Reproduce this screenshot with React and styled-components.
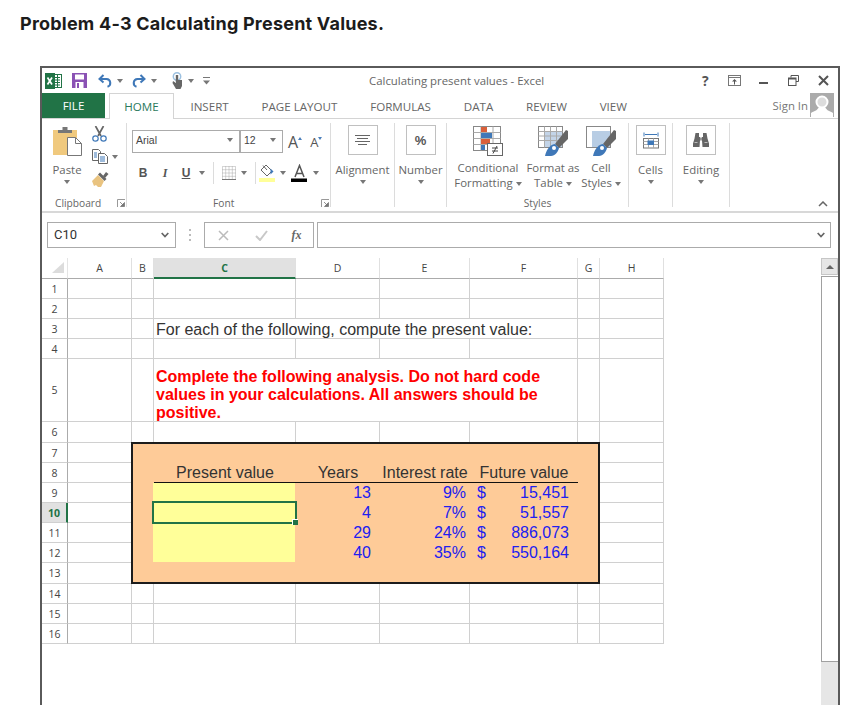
import React from "react";
import styled, { createGlobalStyle } from "styled-components";

const GlobalStyle = createGlobalStyle`
  html, body { margin: 0; padding: 0; background: #fff; }
  body { width: 857px; height: 705px; overflow: hidden; font-family: "Open Sans", "Liberation Sans", sans-serif; }
  * { box-sizing: border-box; }
`;

const Heading = styled.h1`
  margin: 0;
  height: 66px;
  padding: 12px 0 0 20px;
  font-family: Inter, "Liberation Sans", sans-serif;
  font-size: 18px;
  letter-spacing: 0.22px;
  line-height: 24px;
  font-weight: 700;
  color: #1c1c1c;
`;

const Excel = styled.div`
  margin-left: 40px;
  width: 800px;
  height: 639px;
  border: 2px solid #5a5a5a;
  border-bottom: 0;
  display: flex;
  flex-direction: column;
  font-size: 11.4px;
  color: #666;
`;

const TitleBar = styled.div`
  height: 25px;
  display: flex;
  align-items: center;
`;

const QuickAccess = styled.div`
  width: 327px;
  padding-left: 3px;
  display: flex;
  align-items: center;
`;

const QuickItem = styled.span`
  display: inline-flex;
  margin-left: ${(p) => p.$ml || 0}px;
`;

const WindowTitle = styled.div`
  color: #666;
  font-size: 11.4px;
  white-space: nowrap;
`;

const WindowControls = styled.div`
  margin-left: auto;
  display: flex;
  align-items: center;
`;

const Control = styled.span`
  width: 29.5px;
  display: flex;
  justify-content: center;
  color: #555;
  font-weight: 700;
  font-size: 14px;
  line-height: 16px;
`;

const TabBar = styled.div`
  height: 26px;
  display: flex;
  border-bottom: 1px solid #d4d4d4;
  font-size: 11.6px;
`;

const FileTab = styled.div`
  width: 63px;
  height: 25px;
  background: #217346;
  color: #fff;
  display: flex;
  align-items: center;
  justify-content: center;
  margin-right: 4px;
`;

const Tab = styled.div`
  height: 26px;
  padding: 0 16.4px;
  display: flex;
  align-items: center;
  color: ${(p) => (p.$active ? "#2b7a5c" : "#666")};
  ${(p) => p.$active && "width: 65px; justify-content: center; padding: 0; background: #fff; border: 1px solid #d4d4d4; border-bottom: 0;"}
`;

const SignIn = styled.div`
  margin-left: auto;
  display: flex;
  align-items: flex-start;
  gap: 2px;
  padding-right: 4px;
  color: #777;
  font-size: 11.4px;
  line-height: 25px;
`;

const Ribbon = styled.div`
  height: 94px;
  padding: 4px 0 4px;
  display: flex;
  border-bottom: 2px solid #d8d8d8;
`;

const Group = styled.div`
  width: ${(p) => p.$w}px;
  height: 84px;
  border-right: 1px solid #dcdcdc;
  display: flex;
  flex-direction: column;
`;

const GroupBody = styled.div`
  flex: 1;
  display: flex;
  flex-direction: ${(p) => p.$dir || "row"};
  align-items: ${(p) => p.$align || "flex-start"};
  padding-left: ${(p) => p.$pl || 0}px;
`;

const GroupFooter = styled.div`
  height: 12px;
  margin-bottom: -2px;
  display: flex;
  align-items: center;
  justify-content: ${(p) => (p.$pl ? "flex-start" : "center")};
  line-height: 16px;
  color: #666;
  font-size: 10.2px;
  padding-left: ${(p) => p.$pl || 0}px;
`;

const Launcher = styled.span`
  display: inline-flex;
  margin-left: ${(p) => p.$ml}px;
`;

const Collapse = styled.div`
  margin-left: auto;
  align-self: flex-end;
  padding-right: 10px;
  display: flex;
`;

const PasteCol = styled.div`
  width: 28px;
  margin: 3px 0 0 11px;
  display: flex;
  flex-direction: column;
  align-items: center;
`;

const ToolCol = styled.div`
  margin: 3px 0 0 11px;
  display: flex;
  flex-direction: column;
  gap: 7px;
`;

const ToolRow = styled.div`
  display: flex;
  align-items: center;
  gap: 4px;
`;

const BigLabel = styled.div`
  margin-top: ${(p) => p.$mt ?? 8}px;
  line-height: 14px;
  white-space: nowrap;
`;

const Caret = styled.span`
  display: inline-block;
  flex: none;
  width: 0;
  height: 0;
  border-left: 3.5px solid transparent;
  border-right: 3.5px solid transparent;
  border-top: 4px solid #777;
  margin-left: ${(p) => p.$ml || 0}px;
  margin-top: ${(p) => p.$mt || 0}px;
  vertical-align: middle;
`;

const FontRow = styled.div`
  display: flex;
  align-items: center;
  margin-top: ${(p) => p.$mt || 0}px;
`;

const SelectBox = styled.div`
  width: ${(p) => p.$w}px;
  height: 23px;
  border: 1px solid #ababab;
  margin-left: ${(p) => p.$ml || 0}px;
  display: flex;
  align-items: center;
  justify-content: space-between;
  padding: 0 6px 3px 3px;
  font-family: "Liberation Sans", sans-serif;
  font-size: 10.5px;
  color: #444;
`;

const GrowA = styled.span`
  display: inline-flex;
  align-items: flex-start;
  margin-left: ${(p) => p.$ml}px;
  font-size: ${(p) => p.$size}px;
  line-height: 20px;
  color: #555;
`;

const BlueTip = styled.span`
  width: 0;
  height: 0;
  margin-top: 5px;
  border-left: 2.5px solid transparent;
  border-right: 2.5px solid transparent;
  ${(p) => (p.$down ? "border-top: 3px solid #4a7ebb;" : "border-bottom: 3px solid #4a7ebb;")}
`;

const StyleBtn = styled.span`
  width: ${(p) => p.$w}px;
  text-align: center;
  font-family: ${(p) => p.$font || '"Liberation Sans", sans-serif'};
  font-weight: ${(p) => p.$weight || 700};
  font-style: ${(p) => (p.$italic ? "italic" : "normal")};
  text-decoration: ${(p) => (p.$under ? "underline" : "none")};
  font-size: 12px;
  line-height: 16px;
  color: #555;
`;

const VSep = styled.span`
  width: 1px;
  height: 22px;
  background: #dcdcdc;
  margin-left: ${(p) => p.$ml}px;
`;

const Spot = styled.span`
  display: inline-flex;
  margin-left: ${(p) => p.$ml || 0}px;
`;

const IconBox = styled.div`
  width: 30px;
  height: 30px;
  margin-top: 2px;
  border: 1px solid #c0c0c0;
  display: flex;
  align-items: center;
  justify-content: center;
  color: #555;
`;

const PercentGlyph = styled.span`
  font-family: "Liberation Sans", sans-serif;
  font-weight: 700;
  font-size: 13px;
`;

const StyleCol = styled.div`
  width: ${(p) => p.$w}px;
  margin-top: 3px;
  display: flex;
  flex-direction: column;
  align-items: center;
  line-height: 15px;
  white-space: nowrap;
`;

const StyleLabel = styled.div`
  margin-top: 4px;
  text-align: center;
`;

const FormulaBar = styled.div`
  height: 45px;
  padding: 9px 7px 0 5px;
  display: flex;
  align-items: flex-start;
`;

const NameBox = styled.div`
  width: 129px;
  height: 26px;
  border: 1px solid #ababab;
  padding: 0 6px 1px;
  display: flex;
  align-items: center;
  justify-content: space-between;
  color: #333;
  font-size: 13px;
  font-family: Roboto, sans-serif;
`;

const Dots = styled.div`
  width: 28px;
  height: 26px;
  display: flex;
  align-items: center;
  justify-content: center;
`;

const FxBox = styled.div`
  width: 110px;
  height: 26px;
  border: 1px solid #ababab;
  display: grid;
  grid-template-columns: 37px 38px 1fr;
  align-items: center;
  justify-items: center;
`;

const FxMark = styled.span`
  font-family: "Liberation Serif", serif;
  font-style: italic;
  font-weight: 700;
  font-size: 12px;
  color: #666;
`;

const FormulaInput = styled.div`
  flex: 1;
  height: 26px;
  margin-left: 3px;
  border: 1px solid #ababab;
  display: flex;
  align-items: center;
  justify-content: flex-end;
  padding-right: 5px;
`;

const SheetArea = styled.div`
  flex: 1;
  min-height: 0;
  display: flex;
  justify-content: space-between;
`;

const Grid = styled.div`
  width: 622px;
  align-self: flex-start;
  display: grid;
  grid-template-columns: 26px 64px 22px 142px 84px 90px 108px 22px 64px;
  grid-template-rows: 21px 20px 20px 20px 20px 63px 21px 20px 20px 20px 20px 20px 20px 21px 20px 20px 20px;
  font-family: "Liberation Sans", sans-serif;
`;

const Corner = styled.div`
  grid-column: 1;
  grid-row: 1;
  padding: 4px 0 0 10px;
  border-right: 1px solid #e4e4e4;
  border-bottom: 1px solid #ababab;
`;

const ColHead = styled.div`
  grid-column: ${(p) => p.$col};
  grid-row: 1;
  display: flex;
  align-items: center;
  justify-content: center;
  font-family: "Open Sans", sans-serif;
  font-size: 10.5px;
  color: ${(p) => (p.$active ? "#217346" : "#444")};
  font-weight: ${(p) => (p.$active ? 700 : 400)};
  background: ${(p) => (p.$active ? "#e1e1e1" : "#fff")};
  border-right: 1px solid #e0e0e0;
  border-bottom: ${(p) => (p.$active ? "2px solid #217346" : "1px solid #ababab")};
`;

const RowHead = styled.div`
  grid-column: 1;
  grid-row: ${(p) => p.$row};
  display: flex;
  align-items: center;
  justify-content: center;
  font-family: "Open Sans", sans-serif;
  font-size: 10.5px;
  color: ${(p) => (p.$active ? "#217346" : "#444")};
  font-weight: ${(p) => (p.$active ? 700 : 400)};
  background: ${(p) => (p.$active ? "#e1e1e1" : "#fff")};
  border-bottom: 1px solid #d0d0d0;
  border-right: ${(p) => (p.$active ? "2px solid #217346" : "1px solid #ababab")};
`;

const Cell = styled.div`
  grid-column: ${(p) => p.$col};
  grid-row: ${(p) => p.$row};
  border-right: 1px solid #d0d0d0;
  border-bottom: 1px solid #d0d0d0;
`;

const MergedNote = styled.div`
  grid-column: 4 / 8;
  grid-row: ${(p) => p.$row};
  background: #fff;
  border-right: 1px solid #d0d0d0;
  border-bottom: 1px solid #d0d0d0;
  padding-left: 2px;
  display: flex;
  align-items: flex-end;
  font-size: 16px;
  line-height: 16px;
  color: #333;
`;

const Warning = styled(MergedNote)`
  color: #f00;
  font-weight: 700;
  line-height: 18px;
`;

const WarningText = styled.div`
  margin-bottom: -1px;
`;

const Panel = styled.div`
  grid-column: 3 / 9;
  grid-row: 8 / 15;
  margin: -1px 0 0 -1px;
  background: #fecb98;
  border: 2px solid #1c1c1c;
`;

const ColTitle = styled.div`
  grid-column: ${(p) => p.$col};
  grid-row: 9;
  border-bottom: 1px solid #111;
  text-align: center;
  font-size: 16px;
  line-height: 20px;
  color: #333;
  white-space: nowrap;
`;

const InputBlock = styled.div`
  grid-column: 4;
  grid-row: 10 / 14;
  margin: 0 1px 1px -1px;
  background: #ffff99;
`;

const Selected = styled.div`
  grid-column: 4;
  grid-row: 11;
  position: relative;
  margin: -2px -1px -1px -2px;
  border: 2px solid #217346;
  height: 23px;
`;

const FillHandle = styled.span`
  position: absolute;
  right: -3px;
  bottom: -3px;
  width: 6px;
  height: 6px;
  background: #217346;
  border-left: 1px solid #fff;
  border-top: 1px solid #fff;
`;

const Value = styled.div`
  grid-column: ${(p) => p.$col};
  grid-row: ${(p) => p.$row};
  padding-right: ${(p) => p.$pr || 0}px;
  padding-left: ${(p) => p.$pl || 0}px;
  text-align: ${(p) => (p.$left ? "left" : "right")};
  font-size: 16px;
  line-height: 20px;
  color: #2020f0;
`;

const Scrollbar = styled.div`
  width: 17px;
  display: flex;
  flex-direction: column;
`;

const ScrollButton = styled.div`
  height: 17px;
  margin-bottom: 1px;
  background: #e6e6e6;
  border: 1px solid #c6c6c6;
  display: flex;
  align-items: center;
  justify-content: center;
`;

const ScrollThumb = styled.div`
  height: 386px;
  background: #fff;
  border: 1px solid #a0a0a0;
  border-right-width: 0;
`;

const ScrollTrack = styled.div`
  flex: 1;
  background: #e6e6e6;
`;

const UpTip = styled.span`
  width: 0;
  height: 0;
  border-left: 4px solid transparent;
  border-right: 4px solid transparent;
  border-bottom: 4px solid #666;
`;

const ExcelLogo = () => (
  <svg width="17" height="16" viewBox="0 0 17 16">
    <rect x="7.5" y="1.5" width="9" height="13" fill="#fff" stroke="#217346" />
    <path d="M10 4.5h5M10 7h5M10 9.5h5M10 12h5M12.5 2v12" stroke="#217346" strokeWidth="1" fill="none" />
    <rect x="0" y="0" width="10" height="16" fill="#217346" />
    <path d="M2.5 4.5l4.5 7M7 4.5l-4.5 7" stroke="#fff" strokeWidth="1.7" fill="none" />
  </svg>
);

const SaveIcon = () => (
  <svg width="15" height="15" viewBox="0 0 15 15">
    <rect width="15" height="15" fill="#8a52b4" />
    <rect x="3" y="1.5" width="9" height="5" fill="#fff" />
    <rect x="3.5" y="9" width="8" height="6" fill="#fff" />
    <rect x="5" y="10" width="2" height="5" fill="#8a52b4" />
  </svg>
);

const UndoIcon = ({ flip }) => (
  <svg width="14" height="14" viewBox="0 0 14 14" style={flip ? { transform: "scaleX(-1)" } : undefined}>
    <path d="M5.5 1L1.5 5l4 3.5" stroke="#3f78b8" strokeWidth="2" fill="none" />
    <path d="M2 5h6.5a4 4 0 0 1 1 7.8" stroke="#3f78b8" strokeWidth="2" fill="none" />
  </svg>
);

const TouchIcon = () => (
  <svg width="12" height="17" viewBox="0 0 12 17">
    <circle cx="5" cy="4.5" r="3.7" fill="none" stroke="#9cc0e0" strokeWidth="1.5" />
    <rect x="3.8" y="3" width="2.4" height="7" fill="#666" />
    <path d="M1 9l3 2V8h6v6l-1.5 3H4L0.5 11z" fill="#666" />
  </svg>
);

const CustomizeIcon = () => (
  <svg width="7" height="8" viewBox="0 0 7 8">
    <path d="M0 .5h7" stroke="#777" />
    <path d="M0 3.500h7L3.500 7.500z" fill="#777" />
  </svg>
);

const RibbonDisplayIcon = () => (
  <svg width="13" height="11" viewBox="0 0 13 11">
    <rect x=".5" y=".5" width="12" height="10" fill="none" stroke="#777" />
    <path d="M.5 2.5h12" stroke="#777" />
    <path d="M6.5 4L4 6.5h5zM6 6.5h1v3H6z" fill="#555" />
  </svg>
);

const MinIcon = () => (
  <svg width="10" height="10" viewBox="0 0 10 10"><rect x="0" y="6" width="9" height="2" fill="#555" /></svg>
);

const RestoreIcon = () => (
  <svg width="11" height="11" viewBox="0 0 11 11">
    <path d="M3 2.5V.5h7.5v6H8" fill="none" stroke="#555" />
    <rect x=".5" y="3" width="7.5" height="7.5" fill="#fff" stroke="#555" />
    <rect x=".5" y="3" width="7.5" height="1.5" fill="#555" />
  </svg>
);

const CloseIcon = () => (
  <svg width="11" height="11" viewBox="0 0 11 11">
    <path d="M1 1l9 9M10 1l-9 9" stroke="#555" strokeWidth="2" />
  </svg>
);

const Avatar = () => (
  <svg width="24" height="24" viewBox="0 0 24 24">
    <rect width="24" height="24" fill="#ababab" />
    <path d="M1 24v-4c3-2 6-2 8-6h6c2 4 5 4 8 6v4z" fill="#fff" />
    <circle cx="12" cy="9" r="5.5" fill="#dcdcdc" stroke="#fff" strokeWidth="2" />
  </svg>
);

const PasteIcon = () => (
  <svg width="29" height="30" viewBox="0 0 29 30">
    <rect x="0" y="4" width="24" height="25" fill="#f0c97e" />
    <path d="M5 7V4h4.5V1h5v3H19v3z" fill="#777" />
    <path d="M14.5 11.5h8l6 6v12h-14z" fill="#fff" stroke="#777" />
    <path d="M22.5 11.5v6h6" fill="none" stroke="#777" />
  </svg>
);

const ScissorsIcon = () => (
  <svg width="15" height="16" viewBox="0 0 15 16">
    <path d="M3.5 0l5.5 10M11.5 0L6 10" stroke="#666" strokeWidth="1.7" fill="none" />
    <circle cx="3.5" cy="12.5" r="2.7" fill="#fff" stroke="#3f78b8" strokeWidth="1.2" />
    <circle cx="11.5" cy="12.5" r="2.7" fill="#fff" stroke="#3f78b8" strokeWidth="1.2" />
  </svg>
);

const CopyIcon = () => (
  <svg width="16" height="15" viewBox="0 0 16 15">
    <path d="M.5.5h6l2 2v9H.5z" fill="#fff" stroke="#666" />
    <path d="M6.5 4.5h6l3 3v7h-9z" fill="#fff" stroke="#666" />
    <path d="M2 4h3M2 6h3M2 8h3M8 8h5M8 10h5M8 12h5" stroke="#3f78b8" />
  </svg>
);

const BrushIcon = () => (
  <svg width="17" height="16" viewBox="0 0 17 16">
    <path d="M0 10l6-6 6 6-3 6H6l-2-2-2 1z" fill="#e9c380" />
    <path d="M6 3.500L12.500 10l2-2L8 1.500z" fill="#666" />
    <path d="M11 5l3-4 2.500 2L13 7z" fill="#666" />
  </svg>
);

const LauncherIcon = () => (
  <svg width="9" height="9" viewBox="0 0 9 9">
    <path d="M.5 8V.5H8" fill="none" stroke="#999" />
    <path d="M3 3l3.500 3.500M7.500 3.500v4h-4z" fill="#777" stroke="#777" strokeWidth=".8" />
  </svg>
);

const BorderIcon = () => (
  <svg width="14" height="14" viewBox="0 0 14 14">
    <path d="M.5.5h13v13H.5zM7 .5v13M.5 7h13M3.700.5v13M10.300.5v13M.5 3.700h13M.5 10.300h13" fill="none" stroke="#aaa" strokeDasharray="1 1" />
    <path d="M0 13.500h14" stroke="#777" />
  </svg>
);

const FillIcon = () => (
  <svg width="17" height="18" viewBox="0 0 17 18">
    <path d="M7 1l6 6-5 5-6-6z" fill="#fff" stroke="#666" />
    <path d="M4 1.500L8 6" stroke="#666" />
    <path d="M11.500 4.500l3 3-3 3z" fill="#3f78b8" />
    <rect x="0" y="14" width="16" height="4" fill="#ffff99" />
  </svg>
);

const ColorAIcon = () => (
  <svg width="17" height="18" viewBox="0 0 17 18">
    <path d="M4 13L8.500 1.500 13 13M5.500 9.500h6" fill="none" stroke="#555" strokeWidth="1.500" />
    <rect x="0" y="14.500" width="16" height="3.500" fill="#000" />
  </svg>
);

const AlignIcon = () => (
  <svg width="15" height="11" viewBox="0 0 15 11">
    <path d="M0 .5h15M2 3.500h11M0 6.500h15M3 9.500h9" stroke="#666" />
  </svg>
);

const CondIcon = () => (
  <svg width="31" height="30" viewBox="0 0 31 30">
    <rect x=".5" y=".5" width="27" height="24" fill="#fff" stroke="#888" />
    <path d="M8 .5v24M20 .5v24M.5 6.500h27M.5 12.500h27M.5 18.500h27" stroke="#aaa" />
    <rect x="8" y="1" width="6" height="5" fill="#d9603b" />
    <rect x="8" y="7" width="11" height="5" fill="#3f78b8" />
    <rect x="8" y="13" width="9" height="5" fill="#d9603b" />
    <rect x="8" y="19" width="4" height="5" fill="#3f78b8" />
    <rect x="14.500" y="17.500" width="15" height="12" fill="#fff" stroke="#666" />
    <path d="M19 22h6M19 25h6M24 20l-4 7.500" stroke="#444" fill="none" />
  </svg>
);

const TableBrushIcon = ({ tinted }) => (
  <svg width="30" height="30" viewBox="0 0 30 30">
    <rect x=".5" y=".5" width="24" height="21" fill="#fff" stroke="#888" />
    {tinted ? (
      <rect x="6" y="5" width="18" height="16" fill="#b8cde4" />
    ) : (
      <>
        <rect x="6" y="5" width="18" height="16" fill="#c3d4e8" />
        <path d="M.5 5.500h24M.5 10h24M.5 14.500h24M6.500.5v21M12.500.5v21M18.500.5v21" stroke="#aaa" />
      </>
    )}
    <path d="M17 18L28 4l2 1v8L21 22z" fill="#666" />
    <path d="M7 30c1-5 4-11 10-12l4 4c-1 4-4 8-8 8z" fill="#3f78b8" />
    <circle cx="16" cy="22" r="2" fill="#fff" />
  </svg>
);

const CellsIcon = () => (
  <svg width="16" height="17" viewBox="0 0 16 17">
    <path d="M1 .5v4M15 .5v4M2 2.500h12" stroke="#3f78b8" fill="none" />
    <rect x=".5" y="6.500" width="15" height="9.500" fill="#fff" stroke="#777" />
    <path d="M.5 9.500h15M.5 12.500h15M5.500 6.500v9.500M10.500 6.500v9.500" stroke="#aaa" />
    <rect x="4.500" y="8.500" width="6.500" height="4.500" fill="#3f78b8" />
  </svg>
);

const BinocularsIcon = () => (
  <svg width="16" height="14" viewBox="0 0 16 14">
    <path d="M2.500 0h3.500v4h1v3.500L6.500 14H0v-3.500l1.500-5z" fill="#666" />
    <path d="M13.500 0H10v4H9v3.500l.5 6.500H16v-3.500l-1.500-5z" fill="#666" />
    <path d="M7 4.500h2v3H7z" fill="#999" />
    <path d="M1.500 9.500h3M11.500 9.500h3" stroke="#bbb" />
  </svg>
);

const Chevron = ({ color = "#666" }) => (
  <svg width="8" height="6" viewBox="0 0 8 6"><path d="M.7 1L4 4.500 7.300 1" fill="none" stroke={color} strokeWidth="1.700" /></svg>
);

const ChevronUp = () => (
  <svg width="10" height="6" viewBox="0 0 10 6"><path d="M1 5l4-4 4 4" fill="none" stroke="#666" strokeWidth="1.500" /></svg>
);

const DotsIcon = () => (
  <svg width="3" height="12" viewBox="0 0 3 12"><path d="M0 0h2v2H0zM0 5h2v2H0zM0 10h2v2H0z" fill="#bbb" /></svg>
);

const CrossIcon = () => (
  <svg width="11" height="11" viewBox="0 0 11 11"><path d="M1 1l9 9M10 1l-9 9" stroke="#bbb" strokeWidth="1.500" /></svg>
);

const CheckIcon = () => (
  <svg width="13" height="11" viewBox="0 0 13 11"><path d="M1 6l4 4 7-9" fill="none" stroke="#c8c8c8" strokeWidth="2" /></svg>
);

const CornerMark = () => (
  <svg width="12" height="11" viewBox="0 0 12 11"><path d="M12 0v11H0z" fill="#dcdcdc" /></svg>
);

const columns = ["A", "B", "C", "D", "E", "F", "G", "H"];
const rowNumbers = Array.from({ length: 16 }, (_, i) => i + 1);

const analysis = [
  { row: 10, years: "13", rate: "9%", future: "15,451" },
  { row: 11, years: "4", rate: "7%", future: "51,557" },
  { row: 12, years: "29", rate: "24%", future: "886,073" },
  { row: 13, years: "40", rate: "35%", future: "550,164" },
];

export default function App() {
  return (
    <>
      <GlobalStyle />
      <Heading>Problem 4-3 Calculating Present Values.</Heading>
      <Excel>
        <TitleBar>
          <QuickAccess>
            <ExcelLogo />
            <QuickItem $ml={10}><SaveIcon /></QuickItem>
            <QuickItem $ml={11}><UndoIcon /></QuickItem>
            <Caret $ml={5} />
            <QuickItem $ml={9}><UndoIcon flip /></QuickItem>
            <Caret $ml={5} />
            <QuickItem $ml={15}><TouchIcon /></QuickItem>
            <Caret $ml={4} />
            <QuickItem $ml={9}><CustomizeIcon /></QuickItem>
          </QuickAccess>
          <WindowTitle>Calculating present values - Excel</WindowTitle>
          <WindowControls>
            <Control>?</Control>
            <Control><RibbonDisplayIcon /></Control>
            <Control><MinIcon /></Control>
            <Control><RestoreIcon /></Control>
            <Control><CloseIcon /></Control>
          </WindowControls>
        </TitleBar>

        <TabBar>
          <FileTab>FILE</FileTab>
          <Tab $active>HOME</Tab>
          <Tab>INSERT</Tab>
          <Tab>PAGE LAYOUT</Tab>
          <Tab>FORMULAS</Tab>
          <Tab>DATA</Tab>
          <Tab>REVIEW</Tab>
          <Tab>VIEW</Tab>
          <SignIn>Sign In <Avatar /></SignIn>
        </TabBar>

        <Ribbon>
          <Group $w={85}>
            <GroupBody>
              <PasteCol>
                <PasteIcon />
                <BigLabel $mt={7}>Paste</BigLabel>
                <Caret $mt={3} />
              </PasteCol>
              <ToolCol>
                <ScissorsIcon />
                <ToolRow><CopyIcon /><Caret /></ToolRow>
                <BrushIcon />
              </ToolCol>
            </GroupBody>
            <GroupFooter $pl={13}>Clipboard<Launcher $ml={16}><LauncherIcon /></Launcher></GroupFooter>
          </Group>

          <Group $w={204}>
            <GroupBody $dir="column" $pl={5}>
              <FontRow $mt={7}>
                <SelectBox $w={108}>Arial<Caret /></SelectBox>
                <SelectBox $w={43}>12<Caret /></SelectBox>
                <GrowA $ml={5} $size={16}>A<BlueTip /></GrowA>
                <GrowA $ml={8} $size={13}>A<BlueTip $down /></GrowA>
              </FontRow>
              <FontRow $mt={9}>
                <StyleBtn $w={22}>B</StyleBtn>
                <StyleBtn $w={22} $font='"Liberation Serif", serif' $italic>I</StyleBtn>
                <StyleBtn $w={20} $under>U</StyleBtn>
                <Caret $ml={3} />
                <VSep $ml={8} />
                <Spot $ml={8}><BorderIcon /></Spot>
                <Caret $ml={5} />
                <VSep $ml={8} />
                <Spot $ml={3}><FillIcon /></Spot>
                <Caret $ml={4} />
                <Spot $ml={5}><ColorAIcon /></Spot>
                <Caret $ml={5} />
              </FontRow>
            </GroupBody>
            <GroupFooter $pl={86}>Font<Launcher $ml={87}><LauncherIcon /></Launcher></GroupFooter>
          </Group>

          <Group $w={64}>
            <GroupBody $dir="column" $align="center">
              <IconBox><AlignIcon /></IconBox>
              <BigLabel>Alignment</BigLabel>
              <Caret $mt={3} />
            </GroupBody>
          </Group>

          <Group $w={52}>
            <GroupBody $dir="column" $align="center">
              <IconBox><PercentGlyph>%</PercentGlyph></IconBox>
              <BigLabel>Number</BigLabel>
              <Caret $mt={3} />
            </GroupBody>
          </Group>

          <Group $w={182}>
            <GroupBody $pl={3}>
              <StyleCol $w={76}>
                <CondIcon />
                <StyleLabel>Conditional<br />Formatting <Caret /></StyleLabel>
              </StyleCol>
              <StyleCol $w={54}>
                <TableBrushIcon />
                <StyleLabel>Format as<br />Table <Caret /></StyleLabel>
              </StyleCol>
              <StyleCol $w={42}>
                <TableBrushIcon tinted />
                <StyleLabel>Cell<br />Styles <Caret /></StyleLabel>
              </StyleCol>
            </GroupBody>
            <GroupFooter>Styles</GroupFooter>
          </Group>

          <Group $w={44}>
            <GroupBody $dir="column" $align="center">
              <IconBox><CellsIcon /></IconBox>
              <BigLabel>Cells</BigLabel>
              <Caret $mt={3} />
            </GroupBody>
          </Group>

          <Group $w={57}>
            <GroupBody $dir="column" $align="center">
              <IconBox><BinocularsIcon /></IconBox>
              <BigLabel>Editing</BigLabel>
              <Caret $mt={3} />
            </GroupBody>
          </Group>

          <Collapse><ChevronUp /></Collapse>
        </Ribbon>

        <FormulaBar>
          <NameBox>C10<Chevron /></NameBox>
          <Dots><DotsIcon /></Dots>
          <FxBox>
            <CrossIcon />
            <CheckIcon />
            <FxMark>fx</FxMark>
          </FxBox>
          <FormulaInput><Chevron /></FormulaInput>
        </FormulaBar>

        <SheetArea>
          <Grid>
            <Corner><CornerMark /></Corner>
            {columns.map((c, i) => (
              <ColHead key={c} $col={i + 2} $active={c === "C"}>{c}</ColHead>
            ))}
            {rowNumbers.map((n) => (
              <RowHead key={n} $row={n + 1} $active={n === 10}>{n}</RowHead>
            ))}
            {rowNumbers.map((n) =>
              columns.map((c, i) => <Cell key={c + n} $col={i + 2} $row={n + 1} />)
            )}

            <MergedNote $row={4}>For each of the following, compute the present value:</MergedNote>
            <Warning $row={6}>
              <WarningText>
                Complete the following analysis. Do not hard code values in your calculations. All answers should be positive.
              </WarningText>
            </Warning>

            <Panel />
            <ColTitle $col={4}>Present value</ColTitle>
            <ColTitle $col={5}>Years</ColTitle>
            <ColTitle $col={6}>Interest rate</ColTitle>
            <ColTitle $col={7}>Future value</ColTitle>

            <InputBlock />
            {analysis.map((d) => (
              <React.Fragment key={d.row}>
                <Value $col={5} $row={d.row} $pr={9}>{d.years}</Value>
                <Value $col={6} $row={d.row} $pr={4}>{d.rate}</Value>
                <Value $col={7} $row={d.row} $pl={7} $left>$</Value>
                <Value $col={7} $row={d.row} $pr={9}>{d.future}</Value>
              </React.Fragment>
            ))}
            <Selected><FillHandle /></Selected>
          </Grid>

          <Scrollbar>
            <ScrollButton><UpTip /></ScrollButton>
            <ScrollThumb />
            <ScrollTrack />
          </Scrollbar>
        </SheetArea>
      </Excel>
    </>
  );
}
